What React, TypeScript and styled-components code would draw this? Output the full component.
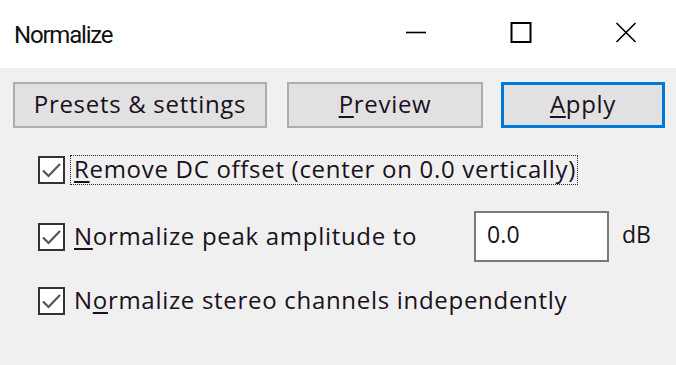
import React from "react";
import styled, { createGlobalStyle } from "styled-components";

const Global = createGlobalStyle`
  html, body { margin: 0; padding: 0; background: #f0f0f0; }
  body { font-family: "Open Sans", "Noto Sans", "DejaVu Sans", sans-serif; color: #000; }
  #root { width: 676px; height: 365px; }
`;

const Window = styled.div`
  width: 676px;
  height: 365px;
  display: flex;
  flex-direction: column;
  background: #f0f0f0;
  overflow: hidden;
`;

const TitleBar = styled.div`
  height: 68px;
  flex: 0 0 68px;
  background: #ffffff;
  display: flex;
  align-items: center;
  justify-content: space-between;
`;

const Title = styled.div`
  font-family: Roboto, "Noto Sans", sans-serif;
  font-size: 24px;
  padding-left: 14px;
  margin-top: 1px;
  letter-spacing: -1.2px;
  color: #111;
`;

const Captions = styled.div`
  display: flex;
  gap: 5px;
  height: 100%;
`;

const CaptionButton = styled.div`
  width: 100px;
  height: 100%;
  display: flex;
  align-items: flex-start;
  justify-content: center;
  padding-top: 22px;
  box-sizing: border-box;
`;

const Content = styled.div`
  flex: 1;
  display: flex;
  flex-direction: column;
  padding: 14px 0 0 13px;
`;

const ButtonRow = styled.div`
  display: flex;
  align-items: center;
`;

const Button = styled.div<{ $w: number; $ml: number; $primary?: boolean }>`
  width: ${(p) => p.$w}px;
  margin-left: ${(p) => p.$ml}px;
  height: 46px;
  box-sizing: border-box;
  background: #e1e1e1;
  border: ${(p) => (p.$primary ? "3px solid #0078d7" : "2px solid #adadad")};
  display: flex;
  align-items: center;
  justify-content: center;
  font-size: 24px;
  letter-spacing: 0.7px;
  padding-bottom: 3px;
  color: #1a1020;
  u { text-decoration-thickness: 2px; text-underline-offset: 3px; }
`;

const Options = styled.div`
  display: flex;
  flex-direction: column;
  padding-left: 25px;
  margin-top: 26px;
`;

const Row = styled.div<{ $h: number; $mt: number }>`
  height: ${(p) => p.$h}px;
  margin-top: ${(p) => p.$mt}px;
  display: flex;
  align-items: center;
`;

const Check = styled.span`
  width: 27px;
  height: 28px;
  box-sizing: border-box;
  border: 2px solid #333;
  background: #fff;
  display: flex;
  align-items: center;
  justify-content: center;
  flex: 0 0 auto;
`;

const LabelText = styled.span<{ $focus?: boolean }>`
  margin-left: 5px;
  padding: 0 1px 3px 3px;
  height: 30px;
  box-sizing: border-box;
  display: flex;
  align-items: center;
  border: 1px dotted ${(p) => (p.$focus ? "#222" : "transparent")};
  font-size: 24px;
  letter-spacing: 0.7px;
  white-space: nowrap;
  color: #1a1020;
  u { text-decoration-thickness: 2px; text-underline-offset: 3px; }
`;

const LabelBox = styled.div`
  width: 436px;
  display: flex;
  align-items: center;
`;

const NumberInput = styled.div`
  width: 135px;
  height: 51px;
  box-sizing: border-box;
  border: 2px solid #7a7a7a;
  background: #fff;
  display: flex;
  align-items: center;
  padding-left: 11px;
  padding-bottom: 6px;
  font-size: 23px;
  letter-spacing: 0.2px;
  color: #1a1020;
`;

const Unit = styled.span`
  margin-left: 13px;
  font-size: 23px;
  padding-bottom: 6px;
  color: #1a1020;
`;

const CheckMark = () => (
  <svg width="21" height="18" viewBox="0 0 21 18">
    <path d="M2 9.5 L7.5 15 L19 3" fill="none" stroke="#555" strokeWidth="2.2" />
  </svg>
);

const CheckOption: React.FC<{ focus?: boolean; children: React.ReactNode }> = ({ focus, children }) => (
  <>
    <Check>
      <CheckMark />
    </Check>
    <LabelText $focus={focus}>{children}</LabelText>
  </>
);

export default function App() {
  return (
    <Window>
      <Global />
      <TitleBar>
        <Title>Normalize</Title>
        <Captions>
          <CaptionButton>
            <svg width="22" height="22" viewBox="0 0 22 22">
              <path d="M1 10.5 H21" stroke="#000" strokeWidth="1.6" />
            </svg>
          </CaptionButton>
          <CaptionButton>
            <svg width="22" height="22" viewBox="0 0 22 22">
              <rect x="1.5" y="1" width="19" height="19" fill="none" stroke="#000" strokeWidth="2" />
            </svg>
          </CaptionButton>
          <CaptionButton>
            <svg width="22" height="22" viewBox="0 0 22 22">
              <path d="M1.5 1 L20.5 20 M20.5 1 L1.5 20" stroke="#000" strokeWidth="1.6" />
            </svg>
          </CaptionButton>
        </Captions>
      </TitleBar>
      <Content>
        <ButtonRow>
          <Button $w={254} $ml={0}>Presets &amp; settings</Button>
          <Button $w={196} $ml={20}>
            <span><u>P</u>review</span>
          </Button>
          <Button $w={164} $ml={18} $primary>
            <span><u>A</u>pply</span>
          </Button>
        </ButtonRow>
        <Options>
          <Row $h={32} $mt={0}>
            <CheckOption focus>
              <span><u>R</u>emove DC offset (center on 0.0 vertically)</span>
            </CheckOption>
          </Row>
          <Row $h={51} $mt={25}>
            <LabelBox>
              <CheckOption>
                <span><u>N</u>ormalize peak amplitude to</span>
              </CheckOption>
            </LabelBox>
            <NumberInput>0.0</NumberInput>
            <Unit>dB</Unit>
          </Row>
          <Row $h={32} $mt={23}>
            <CheckOption>
              <span>N<u>o</u>rmalize stereo channels independently</span>
            </CheckOption>
          </Row>
        </Options>
      </Content>
    </Window>
  );
}
